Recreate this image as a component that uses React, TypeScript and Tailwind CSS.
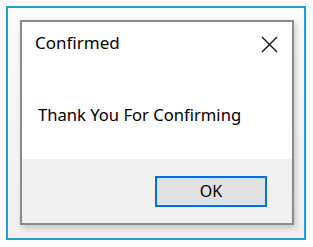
import React from "react";

export default function App() {
  return (
    <div
      className="w-[313px] h-[247px] bg-white pt-[6px] pl-[6px]"
      style={{ fontFamily: '"Noto Sans", "Open Sans", sans-serif' }}
    >
      <div className="w-[300px] h-[234px] border-2 border-[#1ea0dc] bg-gradient-to-b from-[#fafafa] to-[#f0f0f0] pt-[12px] pl-[12px]">
        <div className="w-[274px] h-[205px] border-2 border-[#8a8a8a] bg-white flex flex-col shadow-[2px_3px_6px_rgba(0,0,0,0.18)]">
          <div className="flex items-start justify-between pl-[13px] pr-[14px] pt-[10px] h-[52px]">
            <span className="text-[17px] leading-[22px] text-black">Confirmed</span>
            <svg width="17" height="17" viewBox="0 0 17 17" className="mt-[4px]">
              <path d="M1 1 L16 16 M16 1 L1 16" stroke="#111" strokeWidth="1.4" fill="none" />
            </svg>
          </div>
          <div className="pl-[16px] pt-[29px]">
            <span className="text-[16.6px] leading-[22px] text-black">Thank You For Confirming</span>
          </div>
          <div className="mt-auto h-[64px] bg-[#f0f0f0] flex items-center justify-end pr-[25px]">
            <div className="w-[112px] h-[31px] border-2 border-[#0a6fd0] bg-[#e1e1e1] shadow-[inset_0_0_0_1px_#d3e6f7] flex items-center justify-center text-[16px] text-black">
              OK
            </div>
          </div>
        </div>
      </div>
    </div>
  );
}
